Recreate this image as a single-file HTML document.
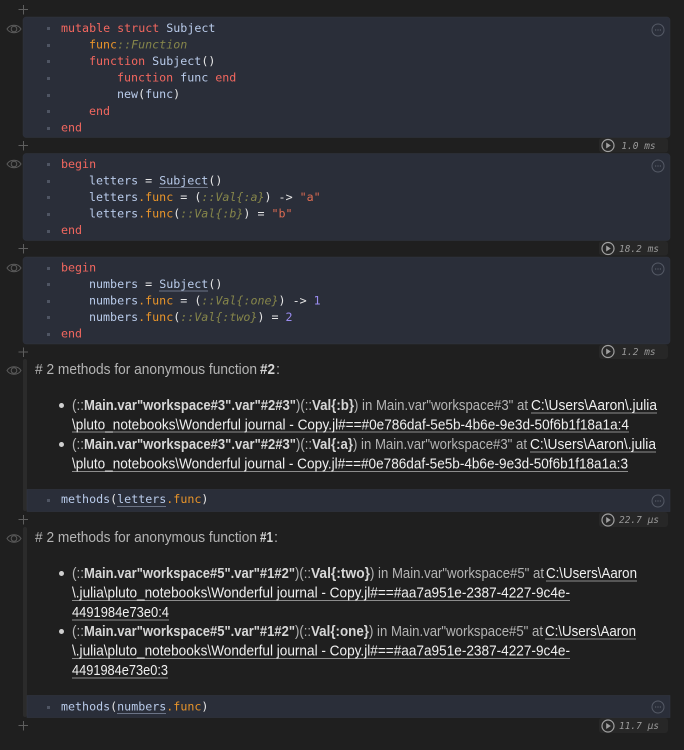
<!DOCTYPE html>
<html><head><meta charset="utf-8"><style>
html,body{margin:0;padding:0;background:#1f1f1f;width:684px;height:750px;overflow:hidden}
svg{display:block}
.m{font-family:"DejaVu Sans Mono",monospace;font-size:11.67px;fill:#b9cbea;white-space:pre}
.k{fill:#f2675f}.f{fill:#e8942a}.t{fill:#85854a;font-style:italic}.w{fill:#e6e6e6}.s{fill:#dc6b52}.n{fill:#9a8cf0}.y{fill:#b9cbea}
.d{fill:#4f5563}
.p{font-family:"Liberation Sans",sans-serif;font-size:14.5px;fill:#b4b4b4}
.b{font-weight:bold;fill:#d6d6d6}
.l{fill:#f0f0f0}
.r{font-family:"DejaVu Sans Mono",monospace;font-size:9.5px;font-style:italic;fill:#9a9a9a;text-anchor:middle}
.u{fill:#8c8c8c}
.pl{stroke:#5e5e5e;stroke-width:1;fill:none}
.eye{stroke:#5b5b5b;stroke-width:1;fill:none}
.mn{stroke:#555a66;stroke-width:1;fill:none}
.pb{stroke:#a0a0a0;stroke-width:1.2;fill:none}
</style></head><body>
<svg xmlns="http://www.w3.org/2000/svg" width="684" height="750" viewBox="0 0 684 750">
<defs>
<g id="plus"><path class="pl" d="M-4.500 0H5M.5 -4.500V5"/></g>
<g id="eye"><path class="eye" d="M-7 0C-4 -5 4 -5 7 0C4 5 -4 5 -7 0Z"/><circle class="eye" r="2.800"/></g>
<g id="menu"><circle class="mn" r="6"/><path d="M-3 0h1.200M-.6 0h1.200M1.800 0h1.200" stroke="#555a66" stroke-width="1.200"/></g>
<g id="play"><circle class="pb" r="6"/><path d="M-1.800 -3L2.800 0L-1.800 3Z" fill="#a0a0a0"/></g>
</defs>

<!-- Cell backgrounds -->
<rect x="23" y="17" width="647" height="120.500" rx="3" fill="#2a2e39" stroke="#30343f" stroke-width=".5"/>
<rect x="23" y="153.500" width="647" height="87" rx="3" fill="#2a2e39" stroke="#30343f" stroke-width=".5"/>
<rect x="23" y="257" width="647" height="87" rx="3" fill="#2a2e39" stroke="#30343f" stroke-width=".5"/>
<rect x="23" y="359" width="4" height="152" rx="2" fill="#2b2b2b"/>
<rect x="23" y="527" width="4" height="190" rx="2" fill="#2b2b2b"/>
<rect x="27" y="489.500" width="643" height="22" fill="#2a2e39" stroke="#343945" stroke-width=".5"/>
<rect x="27" y="695.500" width="643" height="22" fill="#2a2e39" stroke="#343945" stroke-width=".5"/>

<!-- Run boxes -->
<rect x="599" y="138" width="69" height="14.500" rx="3" fill="#272727"/>
<rect x="599" y="241" width="69" height="14.500" rx="3" fill="#272727"/>
<rect x="599" y="344.500" width="69" height="14.500" rx="3" fill="#272727"/>
<rect x="599" y="512" width="69" height="15" rx="3" fill="#272727"/>
<rect x="599" y="718" width="69" height="15" rx="3" fill="#272727"/>

<!-- Plus -->
<use href="#plus" x="23" y="9.500"/><use href="#plus" x="23" y="145.500"/><use href="#plus" x="23" y="248.500"/><use href="#plus" x="23" y="352"/><use href="#plus" x="23" y="519.500"/><use href="#plus" x="23" y="725.500"/>

<!-- Eyes -->
<use href="#eye" x="14" y="29"/><use href="#eye" x="14" y="164"/><use href="#eye" x="14" y="268"/><use href="#eye" x="14" y="370.500"/><use href="#eye" x="14" y="538.500"/>

<!-- Menu -->
<use href="#menu" x="658" y="30"/><use href="#menu" x="658" y="166"/><use href="#menu" x="658" y="269"/><use href="#menu" x="658" y="501"/><use href="#menu" x="658" y="707"/>

<!-- Play -->
<use href="#play" x="608" y="145.500"/><use href="#play" x="608" y="248.500"/><use href="#play" x="608" y="351.500"/><use href="#play" x="608" y="520"/><use href="#play" x="608" y="726"/>
<text class="r" x="638.500" y="149">1.0 ms</text>
<text class="r" x="639" y="252">18.2 ms</text>
<text class="r" x="638.500" y="355">1.2 ms</text>
<text class="r" x="639" y="523">22.7 μs</text>
<text class="r" x="639" y="729">11.7 μs</text>

<!-- Gutter dots -->
<g class="d">
<rect x="47" y="27" width="3" height="3"/><rect x="47" y="44" width="3" height="3"/><rect x="47" y="60" width="3" height="3"/><rect x="47" y="77" width="3" height="3"/><rect x="47" y="94" width="3" height="3"/><rect x="47" y="110" width="3" height="3"/><rect x="47" y="127" width="3" height="3"/>
<rect x="47" y="163" width="3" height="3"/><rect x="47" y="180" width="3" height="3"/><rect x="47" y="196" width="3" height="3"/><rect x="47" y="213" width="3" height="3"/><rect x="47" y="230" width="3" height="3"/>
<rect x="47" y="267" width="3" height="3"/><rect x="47" y="283" width="3" height="3"/><rect x="47" y="300" width="3" height="3"/><rect x="47" y="316" width="3" height="3"/><rect x="47" y="333" width="3" height="3"/>
<rect x="47" y="499" width="3" height="3"/><rect x="47" y="706" width="3" height="3"/>
</g>

<!-- Cell 1 -->
<text class="m" x="61" y="32"><tspan class="k">mutable struct</tspan> Subject</text>
<text class="m" x="89" y="48.500"><tspan class="f">func</tspan><tspan class="t">::Function</tspan></text>
<text class="m" x="89" y="65"><tspan class="k">function</tspan> Subject<tspan class="w">()</tspan></text>
<text class="m" x="117" y="81.500"><tspan class="k">function</tspan> func <tspan class="k">end</tspan></text>
<text class="m" x="117" y="98">new<tspan class="w">(</tspan>func<tspan class="w">)</tspan></text>
<text class="m k" x="89" y="115">end</text>
<text class="m k" x="61" y="131.500">end</text>

<!-- Cell 2 -->
<text class="m k" x="61" y="168">begin</text>
<text class="m" x="89" y="184.500">letters <tspan class="w">=</tspan> Subject<tspan class="w">()</tspan></text>
<rect x="159" y="187" width="49" height="1" style="fill:#6c7486"/>
<text class="m" x="89" y="201">letters<tspan class="f">.func</tspan> <tspan class="w">=</tspan> <tspan class="w">(</tspan><tspan class="t">::Val{:a}</tspan><tspan class="w">) -&gt;</tspan> <tspan class="s">"a"</tspan></text>
<text class="m" x="89" y="217.500">letters<tspan class="f">.func</tspan><tspan class="w">(</tspan><tspan class="t">::Val{:b}</tspan><tspan class="w">) =</tspan> <tspan class="s">"b"</tspan></text>
<text class="m k" x="61" y="234">end</text>

<!-- Cell 3 -->
<text class="m k" x="61" y="271.500">begin</text>
<text class="m" x="89" y="288">numbers <tspan class="w">=</tspan> Subject<tspan class="w">()</tspan></text>
<rect x="159" y="290.500" width="49" height="1" style="fill:#6c7486"/>
<text class="m" x="89" y="304.500">numbers<tspan class="f">.func</tspan> <tspan class="w">=</tspan> <tspan class="w">(</tspan><tspan class="t">::Val{:one}</tspan><tspan class="w">) -&gt;</tspan> <tspan class="n">1</tspan></text>
<text class="m" x="89" y="321">numbers<tspan class="f">.func</tspan><tspan class="w">(</tspan><tspan class="t">::Val{:two}</tspan><tspan class="w">) =</tspan> <tspan class="n">2</tspan></text>
<text class="m k" x="61" y="337.500">end</text>

<!-- Cell 4 prose -->
<text class="p" x="35" y="374" textLength="222" lengthAdjust="spacingAndGlyphs"># 2 methods for anonymous function</text>
<text class="p b" x="260" y="374" textLength="15" lengthAdjust="spacingAndGlyphs">#2</text>
<text class="p" x="276" y="374">:</text>
<circle cx="61.500" cy="405.500" r="2.500" fill="#cfcfcf"/>
<circle cx="61.500" cy="444.500" r="2.500" fill="#cfcfcf"/>

<text class="p" x="72" y="410" textLength="12" lengthAdjust="spacingAndGlyphs">(::</text>
<text class="p b" x="84" y="410" textLength="212" lengthAdjust="spacingAndGlyphs">Main.var"workspace#3".var"#2#3"</text>
<text class="p" x="296" y="410" textLength="16" lengthAdjust="spacingAndGlyphs">)(::</text>
<text class="p b" x="312" y="410" textLength="42" lengthAdjust="spacingAndGlyphs">Val{:b}</text>
<text class="p" x="354" y="410" textLength="174" lengthAdjust="spacingAndGlyphs">) in Main.var"workspace#3" at</text>
<rect class="u" x="531" y="412.500" width="126" height="1"/>
<text class="p l" x="531" y="410" textLength="126" lengthAdjust="spacingAndGlyphs">C:\Users\Aaron\.julia</text>
<rect class="u" x="72" y="431.500" width="557" height="1"/>
<text class="p l" x="72" y="429.500" textLength="557" lengthAdjust="spacingAndGlyphs">\pluto_notebooks\Wonderful journal - Copy.jl#==#0e786daf-5e5b-4b6e-9e3d-50f6b1f18a1a:4</text>

<text class="p" x="72" y="449" textLength="12" lengthAdjust="spacingAndGlyphs">(::</text>
<text class="p b" x="84" y="449" textLength="212" lengthAdjust="spacingAndGlyphs">Main.var"workspace#3".var"#2#3"</text>
<text class="p" x="296" y="449" textLength="16" lengthAdjust="spacingAndGlyphs">)(::</text>
<text class="p b" x="312" y="449" textLength="41" lengthAdjust="spacingAndGlyphs">Val{:a}</text>
<text class="p" x="353" y="449" textLength="174" lengthAdjust="spacingAndGlyphs">) in Main.var"workspace#3" at</text>
<rect class="u" x="530" y="451.500" width="126" height="1"/>
<text class="p l" x="530" y="449" textLength="126" lengthAdjust="spacingAndGlyphs">C:\Users\Aaron\.julia</text>
<rect class="u" x="72" y="471" width="556" height="1"/>
<text class="p l" x="72" y="468.500" textLength="556" lengthAdjust="spacingAndGlyphs">\pluto_notebooks\Wonderful journal - Copy.jl#==#0e786daf-5e5b-4b6e-9e3d-50f6b1f18a1a:3</text>

<!-- Cell 4 code -->
<text class="m" x="61" y="503">methods<tspan class="w">(</tspan>letters<tspan class="f">.func</tspan><tspan class="w">)</tspan></text>
<rect x="117" y="506" width="49" height="1" style="fill:#6c7486"/>

<!-- Cell 5 prose -->
<text class="p" x="35" y="542" textLength="222" lengthAdjust="spacingAndGlyphs"># 2 methods for anonymous function</text>
<text class="p b" x="260" y="542" textLength="13" lengthAdjust="spacingAndGlyphs">#1</text>
<text class="p" x="274" y="542">:</text>
<circle cx="61.500" cy="573.500" r="2.500" fill="#cfcfcf"/>
<circle cx="61.500" cy="631.500" r="2.500" fill="#cfcfcf"/>

<text class="p" x="72" y="578" textLength="12" lengthAdjust="spacingAndGlyphs">(::</text>
<text class="p b" x="84" y="578" textLength="211" lengthAdjust="spacingAndGlyphs">Main.var"workspace#5".var"#1#2"</text>
<text class="p" x="295" y="578" textLength="16" lengthAdjust="spacingAndGlyphs">)(::</text>
<text class="p b" x="311" y="578" textLength="59" lengthAdjust="spacingAndGlyphs">Val{:two}</text>
<text class="p" x="370" y="578" textLength="174" lengthAdjust="spacingAndGlyphs">) in Main.var"workspace#5" at</text>
<rect class="u" x="546" y="580.500" width="91" height="1"/>
<text class="p l" x="546" y="578" textLength="91" lengthAdjust="spacingAndGlyphs">C:\Users\Aaron</text>
<rect class="u" x="72" y="600" width="498" height="1"/>
<text class="p l" x="72" y="597.500" textLength="498" lengthAdjust="spacingAndGlyphs">\.julia\pluto_notebooks\Wonderful journal - Copy.jl#==#aa7a951e-2387-4227-9c4e-</text>
<rect class="u" x="72" y="619.500" width="97" height="1"/>
<text class="p l" x="72" y="617" textLength="97" lengthAdjust="spacingAndGlyphs">4491984e73e0:4</text>

<text class="p" x="72" y="636" textLength="12" lengthAdjust="spacingAndGlyphs">(::</text>
<text class="p b" x="84" y="636" textLength="211" lengthAdjust="spacingAndGlyphs">Main.var"workspace#5".var"#1#2"</text>
<text class="p" x="295" y="636" textLength="16" lengthAdjust="spacingAndGlyphs">)(::</text>
<text class="p b" x="311" y="636" textLength="58" lengthAdjust="spacingAndGlyphs">Val{:one}</text>
<text class="p" x="369" y="636" textLength="174" lengthAdjust="spacingAndGlyphs">) in Main.var"workspace#5" at</text>
<rect class="u" x="545" y="638.500" width="91" height="1"/>
<text class="p l" x="545" y="636" textLength="91" lengthAdjust="spacingAndGlyphs">C:\Users\Aaron</text>
<rect class="u" x="72" y="658" width="498" height="1"/>
<text class="p l" x="72" y="655.500" textLength="498" lengthAdjust="spacingAndGlyphs">\.julia\pluto_notebooks\Wonderful journal - Copy.jl#==#aa7a951e-2387-4227-9c4e-</text>
<rect class="u" x="72" y="677.500" width="96" height="1"/>
<text class="p l" x="72" y="675" textLength="96" lengthAdjust="spacingAndGlyphs">4491984e73e0:3</text>

<!-- Cell 5 code -->
<text class="m" x="61" y="710.500">methods<tspan class="w">(</tspan>numbers<tspan class="f">.func</tspan><tspan class="w">)</tspan></text>
<rect x="117" y="713" width="49" height="1" style="fill:#6c7486"/>
</svg>
</body></html>
